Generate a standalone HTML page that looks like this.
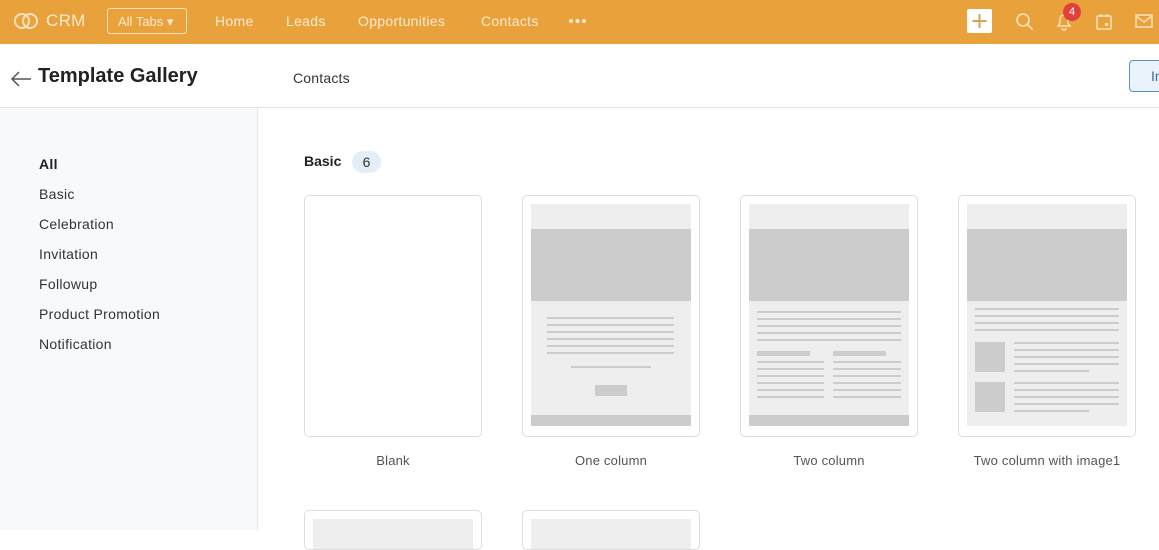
<!DOCTYPE html><html><head><style>
*{margin:0;padding:0;box-sizing:border-box}
body{width:1159px;height:530px;overflow:hidden;font-family:"Liberation Sans",sans-serif;background:#fff;position:relative}
.top{position:absolute;left:0;top:0;width:1159px;height:44px;background:#e9a23b}
.t{position:absolute;color:#fcebd0;font-size:14px;top:13px;letter-spacing:0.3px}
.sub{position:absolute;top:44px;left:0;width:1159px;height:64px;border-bottom:1px solid #e3e5e8;background:#fff}
.side{position:absolute;left:0;top:108px;width:258px;height:422px;background:#f7f9fc;border-right:1px solid #e3e6ea}
.side div{position:absolute;left:39px;font-size:14px;color:#333;letter-spacing:0.3px}
.card{position:absolute;top:195px;width:178px;height:242px;border:1px solid #ddd;border-radius:5px;background:#fff}
.lab{position:absolute;top:453px;width:178px;text-align:center;font-size:13px;color:#555;letter-spacing:0.2px}
.card2{position:absolute;top:510px;width:178px;height:40px;border:1px solid #ddd;border-radius:5px;background:#fff}
.card2 i{position:absolute;left:8px;top:8px;width:160px;height:30px;background:#eee}
</style></head><body>
<div class="top">
<svg style="position:absolute;left:14px;top:11px" width="24" height="20" viewBox="0 0 24 20"><circle cx="8" cy="10" r="7" fill="none" stroke="#fbe2bd" stroke-width="2"/><circle cx="16" cy="10" r="7" fill="none" stroke="#fbe2bd" stroke-width="2"/></svg>
<div class="t" style="left:46px;font-size:17px;top:11px">CRM</div>
<div style="position:absolute;left:107px;top:8px;width:80px;height:26px;border:1px solid #fbe2bd;border-radius:3px;color:#fcebd0;font-size:13px;padding:5px 0 0 10px">All Tabs ▾</div>
<div class="t" style="left:215px">Home</div>
<div class="t" style="left:286px">Leads</div>
<div class="t" style="left:358px">Opportunities</div>
<div class="t" style="left:481px">Contacts</div>
<svg style="position:absolute;left:568px;top:18px" width="20" height="6"><circle cx="3" cy="3" r="2" fill="#fcebd0"/><circle cx="9.5" cy="3" r="2" fill="#fcebd0"/><circle cx="16" cy="3" r="2" fill="#fcebd0"/></svg>
<div style="position:absolute;left:967px;top:9px;width:25px;height:24px;background:#fff;border-radius:2px"><svg width="25" height="24"><path d="M12.5 5v14M5.5 12h14" stroke="#d9a050" stroke-width="2"/></svg></div>
<svg style="position:absolute;left:1015px;top:12px" width="20" height="20"><circle cx="8" cy="8" r="6" fill="none" stroke="#fbe2bd" stroke-width="1.6"/><path d="M12.5 12.5l5 5" stroke="#fbe2bd" stroke-width="1.6"/></svg>
<svg style="position:absolute;left:1055px;top:12px" width="18" height="20"><path d="M3 14h12l-2-3V7a4 4 0 0 0-8 0v4z M7 16a2 2 0 0 0 4 0" fill="none" stroke="#fbe2bd" stroke-width="1.5"/></svg>
<div style="position:absolute;left:1063px;top:3px;width:18px;height:18px;border-radius:9px;background:#e0413a;color:#fff;font-size:11px;text-align:center;line-height:18px">4</div>
<svg style="position:absolute;left:1095px;top:12px" width="18" height="20"><rect x="2" y="4" width="14" height="13" rx="1" fill="none" stroke="#fbe2bd" stroke-width="1.5"/><path d="M6 2v3M12 2v3" stroke="#fbe2bd" stroke-width="1.5"/><rect x="10" y="11" width="3" height="3" fill="#fbe2bd"/></svg>
<svg style="position:absolute;left:1135px;top:14px" width="20" height="16"><rect x="1" y="1" width="16" height="12" fill="none" stroke="#fbe2bd" stroke-width="1.5"/><path d="M1 2l8 6 8-6" fill="none" stroke="#fbe2bd" stroke-width="1.5"/></svg>
</div>
<div class="sub">
<svg style="position:absolute;left:10px;top:26px" width="22" height="18"><path d="M21 9H2M9 2L2 9l7 7" fill="none" stroke="#555" stroke-width="1.5"/></svg>
<div style="position:absolute;left:38px;top:21px;font-size:20px;font-weight:bold;color:#222">Template Gallery</div>
<div style="position:absolute;left:293px;top:26px;font-size:14px;color:#333;letter-spacing:0.2px">Contacts</div>
<div style="position:absolute;left:1129px;top:16px;width:60px;height:32px;border:1px solid #5a8fc0;border-radius:4px;background:#eaf3fc;color:#3a6b9a;font-size:14px;padding:7px 0 0 21px">In</div>
</div>
<div class="side">
<div style="top:48px;font-weight:bold;color:#222">All</div>
<div style="top:78px">Basic</div>
<div style="top:108px">Celebration</div>
<div style="top:138px">Invitation</div>
<div style="top:168px">Followup</div>
<div style="top:198px">Product Promotion</div>
<div style="top:228px">Notification</div>
</div>
<div style="position:absolute;left:304px;top:153px;font-size:14px;font-weight:bold;color:#222">Basic</div>
<div style="position:absolute;left:352px;top:151px;width:29px;height:22px;border-radius:11px;background:#e3eef8;font-size:14px;color:#333;text-align:center;line-height:22px">6</div>

<div class="card" style="left:304px"></div>
<div class="lab" style="left:304px">Blank</div>

<div class="card" style="left:522px"><svg width="178" height="242" style="position:absolute;left:-1px;top:-1px" fill="#ccc">
<rect x="9" y="9" width="160" height="222" fill="#eee"/><rect x="9" y="34" width="160" height="72"/>
<rect x="25" y="122" width="127" height="2"/><rect x="25" y="129" width="127" height="2"/><rect x="25" y="136" width="127" height="2"/><rect x="25" y="143" width="127" height="2"/><rect x="25" y="150" width="127" height="2"/><rect x="25" y="157" width="127" height="2"/>
<rect x="49" y="171" width="80" height="2"/><rect x="73" y="190" width="32" height="11"/><rect x="9" y="220" width="160" height="11"/></svg></div>
<div class="lab" style="left:522px">One column</div>

<div class="card" style="left:740px"><svg width="178" height="242" style="position:absolute;left:-1px;top:-1px" fill="#ccc">
<rect x="9" y="9" width="160" height="222" fill="#eee"/><rect x="9" y="34" width="160" height="72"/>
<rect x="17" y="116" width="144" height="2"/><rect x="17" y="123" width="144" height="2"/><rect x="17" y="130" width="144" height="2"/><rect x="17" y="137" width="144" height="2"/><rect x="17" y="144" width="144" height="2"/>
<rect x="17" y="156" width="53" height="5"/><rect x="93" y="156" width="53" height="5"/>
<g><rect x="17" y="166" width="67" height="2"/><rect x="17" y="173" width="67" height="2"/><rect x="17" y="180" width="67" height="2"/><rect x="17" y="187" width="67" height="2"/><rect x="17" y="194" width="67" height="2"/><rect x="17" y="201" width="67" height="2"/></g>
<g><rect x="93" y="166" width="68" height="2"/><rect x="93" y="173" width="68" height="2"/><rect x="93" y="180" width="68" height="2"/><rect x="93" y="187" width="68" height="2"/><rect x="93" y="194" width="68" height="2"/><rect x="93" y="201" width="68" height="2"/></g>
<rect x="9" y="220" width="160" height="11"/></svg></div>
<div class="lab" style="left:740px">Two column</div>

<div class="card" style="left:958px"><svg width="178" height="242" style="position:absolute;left:-1px;top:-1px" fill="#ccc">
<rect x="9" y="9" width="160" height="222" fill="#eee"/><rect x="9" y="34" width="160" height="72"/>
<rect x="17" y="113" width="144" height="2"/><rect x="17" y="120" width="144" height="2"/><rect x="17" y="127" width="144" height="2"/><rect x="17" y="134" width="144" height="2"/>
<rect x="17" y="147" width="30" height="30"/><rect x="17" y="187" width="30" height="30"/>
<rect x="56" y="147" width="105" height="2"/><rect x="56" y="154" width="105" height="2"/><rect x="56" y="161" width="105" height="2"/><rect x="56" y="168" width="105" height="2"/><rect x="56" y="175" width="75" height="2"/>
<rect x="56" y="187" width="105" height="2"/><rect x="56" y="194" width="105" height="2"/><rect x="56" y="201" width="105" height="2"/><rect x="56" y="208" width="105" height="2"/><rect x="56" y="215" width="75" height="2"/>
</svg></div>
<div class="lab" style="left:958px">Two column with image1</div>

<div class="card2" style="left:304px"><i></i></div>
<div class="card2" style="left:522px"><i></i></div>
</body></html>
